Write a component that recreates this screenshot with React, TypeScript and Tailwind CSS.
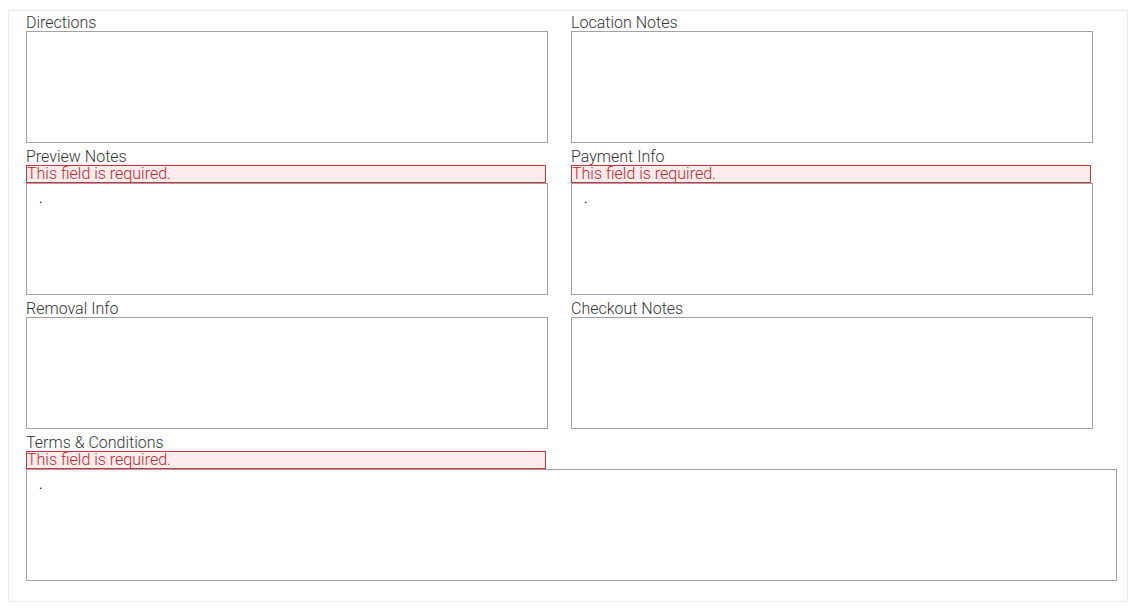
import React from "react";

type FieldProps = {
  label: string;
  error?: boolean;
  value?: string;
  wide?: boolean;
};

function Field({ label, error = false, value = "", wide = false }: FieldProps) {
  return (
    <div className={wide ? "col-span-2" : ""}>
      <label className="block text-[16px] font-light leading-[16px] text-[#333]">{label}</label>
      {error && (
        <div className="h-[18px] w-[520px] border border-[#c23a3e] bg-[#fdeceb] text-[16px] font-light leading-[16px] text-[#c1272d]">
          This field is required.
        </div>
      )}
      <textarea
        readOnly
        defaultValue={value}
        className={`block h-[112px] resize-none border border-[#a3a3a3] bg-white px-3 pt-[5px] text-[13px] text-black outline-none ${
          wide ? "w-full" : "w-[522px]"
        }`}
      />
    </div>
  );
}

export default function App() {
  return (
    <div
      className="min-h-[609px] bg-white pt-[10px] pl-2"
      style={{ fontFamily: "Roboto, 'Liberation Sans', sans-serif" }}
    >
      <div className="w-[1120px] border border-[#ebebeb] pl-[17px] pr-[10px] pt-[4px] pb-[20px]">
        <div className="grid grid-cols-[545px_546px] gap-y-[6px]">
          <Field label="Directions" />
          <Field label="Location Notes" />
          <Field label="Preview Notes" error value="." />
          <Field label="Payment Info" error value="." />
          <Field label="Removal Info" />
          <Field label="Checkout Notes" />
          <Field label="Terms & Conditions" error value="." wide />
        </div>
      </div>
    </div>
  );
}
